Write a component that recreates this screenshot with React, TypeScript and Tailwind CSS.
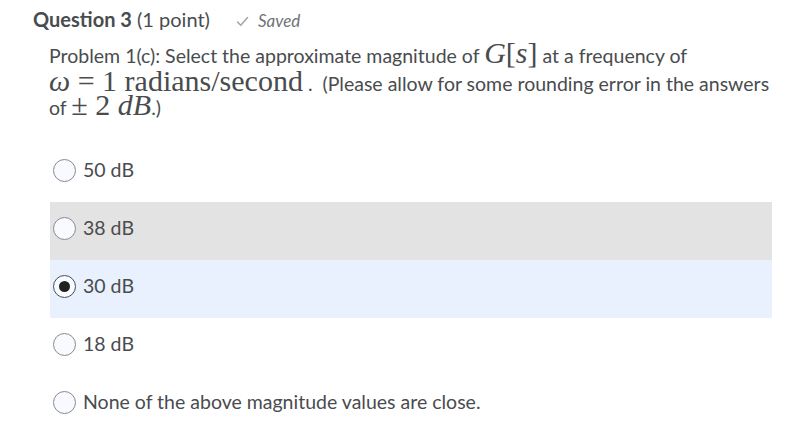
import React from "react";

const options = [
  { label: "50 dB", bg: "bg-white", selected: false },
  { label: "38 dB", bg: "bg-[#e3e3e3]", selected: false },
  { label: "30 dB", bg: "bg-[#e8f1fd]", selected: true },
  { label: "18 dB", bg: "bg-white", selected: false },
  { label: "None of the above magnitude values are close.", bg: "bg-white", selected: false },
];

function Radio({ selected }: { selected: boolean }) {
  return (
    <span
      className={
        "flex h-[23px] w-[23px] shrink-0 items-center justify-center rounded-full border bg-[#f9faff] " +
        (selected ? "border-[#494c4e]" : "border-[#868a8d]")
      }
    >
      {selected && <span className="h-[11px] w-[11px] rounded-full bg-[#202122]" />}
    </span>
  );
}

export default function App() {
  const serif = { fontFamily: '"Liberation Serif", "DejaVu Serif", serif' };
  return (
    <div
      className="h-[447px] w-[789px] bg-white pl-[33px] pt-[5px] text-[#494c4e]"
      style={{ fontFamily: 'Lato, "Liberation Sans", sans-serif' }}
    >
      <div className="flex items-baseline leading-[28px]">
        <span className="text-[20px]">
          <span className="font-bold">Question 3</span> (1 point)
        </span>
        <span className="ml-[26px] flex items-baseline text-[17px] italic text-[#6e7376]">
          <svg width="13" height="11" viewBox="0 0 13 11" className="mr-[9px] self-center" fill="none">
            <path d="M1.5 6 L4.8 9.3 L11.5 1.5" stroke="#a3a8ab" strokeWidth="1.6" strokeLinecap="round" strokeLinejoin="round" />
          </svg>
          Saved
        </span>
      </div>

      <div className="ml-[16px] mt-[6px] w-[740px] text-[19.5px]">
        <div className="h-[24px] leading-[24px]">
          Problem 1(c): Select the approximate magnitude of{" "}
          <span className="text-[30px]" style={serif}>
            <i>G</i>[<i>s</i>]
          </span>{" "}
          at a frequency of
        </div>
        <div className="mt-[4px] h-[24px] leading-[24px]">
          <span className="text-[30px]" style={serif}>
            <i>ω</i> = 1 radians/second
          </span>{" "}
          .&nbsp; (Please allow for some rounding error in the answers
        </div>
        <div className="h-[24px] leading-[24px]">
          of{" "}
          <span className="text-[30px]" style={serif}>
            ± 2 <i>dB</i>
          </span>
          .)
        </div>
      </div>

      <div className="ml-[17px] mt-[27px] w-[722px]">
        {options.map((o) => (
          <div key={o.label} className={"flex h-[58px] items-center gap-[7px] pb-[6px] pl-[3px] text-[19.5px] " + o.bg}>
            <Radio selected={o.selected} />
            <span>{o.label}</span>
          </div>
        ))}
      </div>
    </div>
  );
}
